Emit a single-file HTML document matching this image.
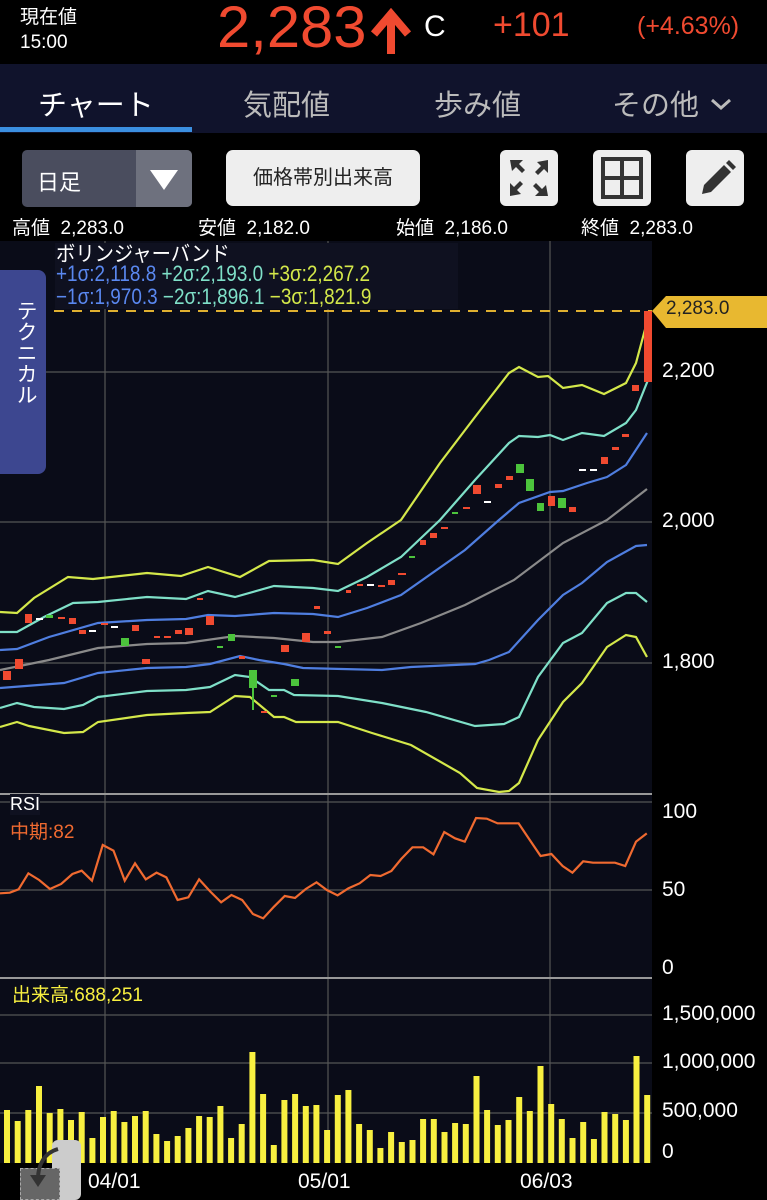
<!DOCTYPE html>
<html><head><meta charset="utf-8"><style>
*{margin:0;padding:0;box-sizing:border-box}
body{width:767px;height:1200px;background:#000;overflow:hidden;position:relative;font-family:"Liberation Sans","Noto Sans CJK JP",sans-serif;color:#fff}
.a{position:absolute;white-space:nowrap}
</style></head><body>
<div class="a" style="left:20px;top:2px;font-size:19px">現在値</div>
<div class="a" style="left:20px;top:32px;font-size:19px">15:00</div>
<div class="a" style="left:217px;top:-6px;font-size:58px;color:#f04a30;letter-spacing:0px;transform:scaleX(1.03);transform-origin:left">2,283</div>
<svg class="a" style="left:370px;top:8px" width="42" height="46"><path d="M21 46V10M4 26L21 6L38 26" stroke="#f04a30" stroke-width="8" fill="none"/></svg>
<div class="a" style="left:424px;top:10px;font-size:30px">C</div>
<div class="a" style="left:493px;top:6px;font-size:34px;color:#f04a30">+101</div>
<div class="a" style="left:637px;top:12px;font-size:25px;color:#f04a30">(+4.63%)</div>

<div class="a" style="left:0;top:64px;width:767px;height:69px;background:#10132c"></div>
<div class="a" style="left:0;top:127px;width:192px;height:5px;background:#3b8fe0"></div>
<div class="a" style="left:38px;top:82px;font-size:29px;color:#fff">チャート</div>
<div class="a" style="left:243px;top:82px;font-size:29px;color:#bbb">気配値</div>
<div class="a" style="left:434px;top:82px;font-size:29px;color:#bbb">歩み値</div>
<div class="a" style="left:612px;top:82px;font-size:29px;color:#bbb">その他</div>
<svg class="a" style="left:709px;top:97px" width="24" height="14"><path d="M3 3L12 11L21 3" stroke="#bbb" stroke-width="3" fill="none"/></svg>

<div class="a" style="left:22px;top:150px;width:170px;height:57px;background:#4a4d5e;border-radius:5px;overflow:hidden"><div style="position:absolute;left:114px;top:0;width:56px;height:57px;background:#6e717e"></div></div>
<div class="a" style="left:37px;top:165px;font-size:22px">日足</div>
<svg class="a" style="left:148px;top:168px" width="32" height="24"><path d="M2 2H30L16 22Z" fill="#fff"/></svg>
<div class="a" style="left:226px;top:150px;width:194px;height:56px;background:#eee;border-radius:7px;color:#222;font-size:20px;text-align:center;line-height:56px">価格帯別出来高</div>
<div class="a" style="left:500px;top:150px;width:58px;height:56px;background:#eee;border-radius:6px"></div>
<svg class="a" style="left:500px;top:150px" width="58" height="56"><g fill="#333"><path d="M10 10h13l-4 4 6 6-3 3-6-6-4 4zM48 10v13l-4-4-6 6-3-3 6-6-4-4zM10 46V33l4 4 6-6 3 3-6 6 4 4zM48 46H35l4-4-6-6 3-3 6 6 4-4z"/></g></svg>
<div class="a" style="left:593px;top:150px;width:58px;height:56px;background:#eee;border-radius:6px"></div>
<svg class="a" style="left:593px;top:150px" width="58" height="56"><rect x="10" y="9" width="38" height="38" fill="none" stroke="#333" stroke-width="4"/><path d="M29 9v38M10 28h38" stroke="#333" stroke-width="4"/></svg>
<div class="a" style="left:686px;top:150px;width:58px;height:56px;background:#eee;border-radius:6px"></div>
<svg class="a" style="left:686px;top:150px" width="58" height="56"><path d="M16 44l2-9 20-20 7 7-20 20z" fill="#333"/><path d="M40 13l3-3 7 7-3 3z" fill="#333"/></svg>

<div class="a" style="left:12px;top:213px;font-size:19px">高値&nbsp; 2,283.0</div>
<div class="a" style="left:198px;top:213px;font-size:19px">安値&nbsp; 2,182.0</div>
<div class="a" style="left:396px;top:213px;font-size:19px">始値&nbsp; 2,186.0</div>
<div class="a" style="left:581px;top:213px;font-size:19px">終値&nbsp; 2,283.0</div>

<svg class="a" style="left:0;top:0" width="767" height="1200">
<rect x="0" y="241" width="652" height="922" fill="#0a0c18"/>
<g stroke="#555" stroke-width="1.2">
<path d="M105 241V1163M328 241V1163M550 241V1163"/>
<path d="M0 372H652M0 522H652M0 663H652M0 802H652M0 890H652M0 1015H652M0 1063H652M0 1113H652"/>
</g>
<g stroke="#999" stroke-width="2"><path d="M0 794H652M0 978H652"/></g>
<rect x="55" y="243" width="403" height="66" fill="#0f1120"/>
<path d="M0 311H652" stroke="#e0b030" stroke-width="2" stroke-dasharray="10 8"/>
<g fill="none" stroke-width="2.2">
<path stroke="#d4e84a" d="M0 612L17 613L34 598L68 577L93 579L147 573L181 576L208 567L240 577L269 561L313 560L338 564L367 543L401 520L440 463L475 417L509 373L519 367L538 377L548 376L563 388L582 385L604 394L626 383L636 363L647 322"/>
<path stroke="#7fe0c8" d="M0 632L17 632L44 617L73 603L98 602L147 597L186 599L208 591L235 597L274 586L313 588L338 591L367 577L401 557L440 520L475 480L509 443L519 436L538 437L550 435L563 440L582 433L604 436L626 423L636 410L648 380"/>
<path stroke="#4f7ee0" d="M0 650L17 649L49 637L98 623L147 620L186 619L208 615L235 616L274 613L313 614L338 617L367 608L401 595L465 550L499 520L519 503L550 492L563 491L587 483L607 477L626 465L647 433"/>
<path stroke="#8a8a8a" d="M0 670L49 660L98 648L147 644L186 643L235 636L274 638L313 642L338 642L382 637L421 623L465 605L514 580L563 543L607 520L647 489"/>
<path stroke="#4f7ee0" d="M0 688L64 683L98 673L147 668L186 667L210 664L240 656L259 660L284 664L303 668L342 669L382 670L411 667L475 664L489 660L509 652L538 620L563 595L582 583L607 562L636 546L647 545"/>
<path stroke="#7fe0c8" d="M0 708L17 703L34 707L64 709L83 705L98 697L147 691L186 690L210 687L235 675L250 677L269 690L284 690L294 695L338 696L382 703L426 712L475 726L504 724L519 717L538 677L563 643L582 633L607 603L626 593L636 593L647 602"/>
<path stroke="#d4e84a" d="M0 727L17 722L29 726L64 733L83 732L98 722L147 715L186 713L210 712L235 696L250 697L274 717L284 717L296 722L338 722L372 733L411 745L460 773L477 788L499 792L509 791L519 783L538 740L563 702L582 683L607 647L626 635L636 637L647 657"/>
</g>
<g fill="#f04a30">
<rect x="25" y="614" width="7" height="9"/><rect x="58" y="617" width="7" height="2"/><rect x="69" y="618" width="7" height="6"/><rect x="79" y="630" width="7" height="4"/><rect x="101" y="623" width="7" height="2"/><rect x="132" y="625" width="7" height="6"/><rect x="154" y="636" width="6" height="2"/><rect x="164" y="636" width="7" height="2"/><rect x="175" y="630" width="7" height="4"/><rect x="185" y="628" width="8" height="7"/><rect x="197" y="598" width="6" height="2"/><rect x="206" y="616" width="8" height="9"/><rect x="15" y="659" width="8" height="10"/><rect x="3" y="671" width="8" height="9"/><rect x="142" y="659" width="8" height="5"/><rect x="239" y="656" width="6" height="3"/><rect x="261" y="711" width="6" height="2"/><rect x="281" y="645" width="8" height="7"/><rect x="302" y="633" width="8" height="9"/><rect x="314" y="606" width="6" height="3"/><rect x="324" y="631" width="7" height="3"/><rect x="346" y="590" width="5" height="3"/><rect x="357" y="584" width="6" height="2"/><rect x="378" y="585" width="7" height="2"/><rect x="388" y="580" width="7" height="5"/><rect x="398" y="573" width="8" height="2"/><rect x="420" y="540" width="6" height="5"/><rect x="430" y="533" width="7" height="5"/><rect x="441" y="527" width="7" height="2"/><rect x="463" y="507" width="7" height="2"/><rect x="473" y="485" width="8" height="9"/><rect x="495" y="484" width="7" height="4"/><rect x="506" y="476" width="7" height="4"/><rect x="548" y="496" width="7" height="10"/><rect x="569" y="507" width="7" height="5"/><rect x="601" y="457" width="7" height="7"/><rect x="612" y="447" width="7" height="3"/><rect x="622" y="434" width="7" height="3"/><rect x="632" y="385" width="7" height="6"/><rect x="644" y="311" width="8" height="71"/>
</g>
<g fill="#fff"><rect x="36" y="618" width="7" height="2"/><rect x="89" y="630" width="7" height="2"/><rect x="111" y="626" width="7" height="2"/><rect x="367" y="584" width="7" height="2"/><rect x="484" y="501" width="7" height="2"/><rect x="579" y="469" width="7" height="2"/><rect x="590" y="469" width="7" height="2"/></g>
<g fill="#4cc43c"><rect x="46" y="615" width="7" height="3"/><rect x="121" y="638" width="8" height="8"/><rect x="217" y="646" width="6" height="2"/><rect x="228" y="634" width="7" height="7"/><rect x="249" y="670" width="8" height="18"/><rect x="252" y="688" width="2" height="22"/><rect x="271" y="695" width="6" height="2"/><rect x="291" y="679" width="8" height="7"/><rect x="335" y="646" width="6" height="2"/><rect x="409" y="556" width="6" height="2"/><rect x="452" y="512" width="6" height="2"/><rect x="516" y="464" width="8" height="9"/><rect x="526" y="479" width="8" height="12"/><rect x="537" y="503" width="7" height="8"/><rect x="558" y="498" width="8" height="10"/></g>
<g transform="translate(0,790) scale(0.48924,0.33333)"><path fill="none" stroke="#f06a30" stroke-width="2.2" vector-effect="non-scaling-stroke" d="M0 310L20 308L38 298L58 250L80 270L102 297L125 282L148 252L167 242L188 272L210 165L232 182L255 272L276 220L298 268L320 248L340 262L363 330L385 322L407 268L430 305L452 337L473 315L495 330L517 372L538 385L560 350L582 318L603 324L625 297L647 277L668 300L690 316L712 295L735 280L757 255L778 258L800 243L820 207L843 172L865 172L886 193L908 126L930 145L950 155L973 84L995 86L1017 100L1060 100L1082 148L1105 198L1127 192L1150 228L1170 248L1192 214L1212 218L1257 218L1278 228L1300 155L1322 130"/></g>
<g fill="#f8f040" id="v"></g>
<path d="M652 311L666 296H767V328H666Z" fill="#e8b830"/>
</svg>
<div class="a" style="left:666px;top:298px;font-size:19px;color:#222">2,283.0</div>
<div class="a" style="left:662px;top:359px;font-size:21px">2,200</div>
<div class="a" style="left:662px;top:509px;font-size:21px">2,000</div>
<div class="a" style="left:662px;top:650px;font-size:21px">1,800</div>
<div class="a" style="left:662px;top:800px;font-size:21px">100</div>
<div class="a" style="left:662px;top:878px;font-size:21px">50</div>
<div class="a" style="left:662px;top:956px;font-size:21px">0</div>
<div class="a" style="left:662px;top:1002px;font-size:21px">1,500,000</div>
<div class="a" style="left:662px;top:1050px;font-size:21px">1,000,000</div>
<div class="a" style="left:662px;top:1099px;font-size:21px">500,000</div>
<div class="a" style="left:662px;top:1140px;font-size:21px">0</div>
<div class="a" style="left:56px;top:238px;font-size:21px;transform:scaleX(0.92);transform-origin:left">ボリンジャーバンド</div>
<div class="a" style="left:56px;top:261px;font-size:22px;color:#5a88f0;transform:scaleX(0.86);transform-origin:left">+1σ:2,118.8 <span style="color:#7fe0c8">+2σ:2,193.0</span> <span style="color:#d4e84a">+3σ:2,267.2</span></div>
<div class="a" style="left:56px;top:284px;font-size:22px;color:#5a88f0;transform:scaleX(0.86);transform-origin:left">−1σ:1,970.3 <span style="color:#7fe0c8">−2σ:1,896.1</span> <span style="color:#d4e84a">−3σ:1,821.9</span></div>
<div class="a" style="left:0;top:270px;width:46px;height:204px;background:#3d4790;border-radius:0 8px 8px 0"></div>
<div class="a" style="left:10px;top:300px;font-size:21px;writing-mode:vertical-rl">テクニカル</div>
<div class="a" style="left:10px;top:794px;font-size:18px;background:#0f1120">RSI</div>
<div class="a" style="left:10px;top:817px;font-size:19px;color:#f06a30">中期:82</div>
<div class="a" style="left:12px;top:980px;font-size:19px;color:#f8f040">出来高:688,251</div>
<div class="a" style="left:88px;top:1170px;font-size:21px">04/01</div>
<div class="a" style="left:298px;top:1170px;font-size:21px">05/01</div>
<div class="a" style="left:520px;top:1170px;font-size:21px">06/03</div>
<div class="a" style="left:52px;top:1140px;width:29px;height:60px;background:#ccc;border-radius:6px"></div>
<div class="a" style="left:20px;top:1168px;width:40px;height:32px;background:#666;border:1px dashed #aaa"></div>
<svg class="a" style="left:22px;top:1145px" width="40" height="50"><path d="M36 4C22 8 16 20 16 34" stroke="#333" stroke-width="4" fill="none"/><path d="M8 30L16 42L24 30Z" fill="#333"/></svg>
<script>
var h=[53,42,53,77,50,54,43,51,25,46,52,41,47,52,29,22,27,35,47,46,57,25,39,111,69,18,63,69,57,58,33,68,73,39,33,15,31,21,23,44,44,31,40,39,87,53,38,43,66,52,97,59,44,25,41,24,51,49,43,107,68];
var g=document.getElementById('v'),s='';
for(var i=0;i<h.length;i++){s+='<rect x="'+(4+i*10.67).toFixed(1)+'" y="'+(1163-h[i])+'" width="6" height="'+h[i]+'"/>';}
g.innerHTML=s;
</script>
</body></html>
